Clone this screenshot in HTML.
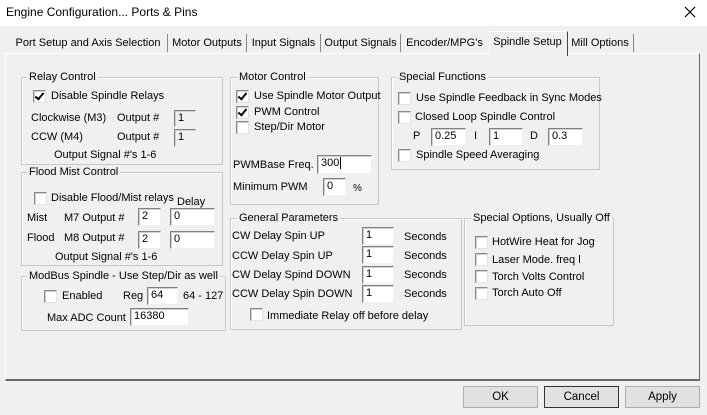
<!DOCTYPE html>
<html><head><meta charset="utf-8"><style>
body{margin:0;width:707px;height:415px;background:#f0f0f0;position:relative;overflow:hidden;font-family:"Liberation Sans",sans-serif;font-size:11px;color:#000}
.a{position:absolute;white-space:nowrap;line-height:14px}
.g{position:absolute;border:1px solid #c8c8c8;box-shadow:inset 1px 1px 0 #fff}
.gl{position:absolute;background:#f0f0f0;padding:0 2px;line-height:14px;white-space:nowrap}
.cb{position:absolute;width:11px;height:11px;border:1px solid #8a8a8a;background:#fff;border-right-color:#e3e3e3;border-bottom-color:#e3e3e3;box-shadow:inset 1px 1px 0 #d0d0d0}
.cb.c::after{content:"";position:absolute;left:3px;top:0px;width:3px;height:7px;border:solid #000;border-width:0 2px 2px 0;transform:rotate(40deg)}
.in{position:absolute;background:#fff;border-top:1px solid #808080;border-left:1px solid #808080;border-right:1px solid #f0f0f0;border-bottom:1px solid #f0f0f0;box-shadow:inset 1px 1px 0 #d0d0d0;line-height:15px;padding-left:3px;box-sizing:border-box}
.in.d{background:#f0f0f0}
.tab{position:absolute;top:34px;height:18px;line-height:18px;border-right:1px solid #888;text-align:center;white-space:nowrap;box-sizing:border-box}
.btn{position:absolute;top:386px;height:22px;width:75px;background:#e1e1e1;border:1px solid #adadad;text-align:center;line-height:20px;box-sizing:border-box;font-size:11.5px}
</style></head><body>
<div style="position:absolute;left:0;top:0;width:707px;height:26px;background:#fff"></div>
<div class="a" style="left:6px;top:5px;font-size:12px">Engine Configuration... Ports &amp; Pins</div>
<svg style="position:absolute;left:684px;top:6px" width="12" height="12"><path d="M1 1L11 11M11 1L1 11" stroke="#000" stroke-width="1.2"/></svg>

<div style="position:absolute;left:5px;top:53px;width:693px;height:325px;border-left:1px solid #fff;border-top:1px solid #fff;border-right:1px solid #696969;border-bottom:2px solid #696969;box-sizing:content-box"></div>
<div class="tab" style="left:9px;width:159px">Port Setup and Axis Selection</div>
<div class="tab" style="left:168px;width:79px">Motor Outputs</div>
<div class="tab" style="left:247px;width:74px">Input Signals</div>
<div class="tab" style="left:321px;width:80px">Output Signals</div>
<div class="tab" style="left:401px;width:87px;border-right:none">Encoder/MPG's</div>
<div style="position:absolute;left:489px;top:31px;width:77px;height:24px;background:#f0f0f0;border-top:1px solid #fff;border-left:1px solid #fff;border-right:1px solid #444"></div>
<div class="a" style="left:489px;top:35px;width:77px;text-align:center">Spindle Setup</div>
<div class="tab" style="left:567px;width:67px">Mill Options</div>

<!-- Relay -->
<div class="g" style="left:21px;top:77px;width:200px;height:86px"></div>
<div class="gl" style="left:27px;top:70px">Relay Control</div>
<div class="cb c" style="left:33px;top:90px"></div><div class="a" style="left:51px;top:89px">Disable Spindle Relays</div>
<div class="a" style="left:31px;top:111px">Clockwise (M3)</div><div class="a" style="left:117px;top:111px">Output #</div>
<div class="in d" style="left:174px;top:110px;width:22px;height:17px">1</div>
<div class="a" style="left:31px;top:130px">CCW (M4)</div><div class="a" style="left:117px;top:130px">Output #</div>
<div class="in d" style="left:174px;top:129px;width:22px;height:18px">1</div>
<div class="a" style="left:54px;top:148px">Output Signal #'s 1-6</div>

<!-- Flood -->
<div class="g" style="left:21px;top:172px;width:200px;height:92px"></div>
<div class="gl" style="left:27px;top:165px">Flood Mist Control</div>
<div class="cb" style="left:34px;top:192px"></div><div class="a" style="left:51px;top:191px">Disable Flood/Mist relays</div>
<div class="a" style="left:177px;top:195px">Delay</div>
<div class="a" style="left:27px;top:211px">Mist</div><div class="a" style="left:64px;top:211px">M7 Output #</div>
<div class="in" style="left:138px;top:208px;width:23px;height:18px">2</div>
<div class="in" style="left:170px;top:208px;width:45px;height:18px">0</div>
<div class="a" style="left:27px;top:231px">Flood</div><div class="a" style="left:64px;top:231px">M8 Output #</div>
<div class="in" style="left:138px;top:231px;width:23px;height:18px">2</div>
<div class="in" style="left:170px;top:231px;width:45px;height:18px">0</div>
<div class="a" style="left:55px;top:250px">Output Signal #'s 1-6</div>

<!-- ModBus -->
<div class="g" style="left:21px;top:276px;width:203px;height:53px"></div>
<div class="gl" style="left:27px;top:269px">ModBus Spindle - Use Step/Dir as well</div>
<div class="cb" style="left:44px;top:290px"></div><div class="a" style="left:62px;top:289px">Enabled</div>
<div class="a" style="left:123px;top:289px">Reg</div>
<div class="in" style="left:147px;top:287px;width:31px;height:18px">64</div>
<div class="a" style="left:183px;top:289px">64 - 127</div>
<div class="a" style="left:47px;top:311px">Max ADC Count</div>
<div class="in" style="left:130px;top:308px;width:59px;height:18px">16380</div>

<!-- Motor -->
<div class="g" style="left:230px;top:77px;width:147px;height:126px"></div>
<div class="gl" style="left:237px;top:70px">Motor Control</div>
<div class="cb c" style="left:236px;top:90px"></div><div class="a" style="left:254px;top:89px">Use Spindle Motor Output</div>
<div class="cb c" style="left:236px;top:106px"></div><div class="a" style="left:254px;top:105px">PWM Control</div>
<div class="cb" style="left:236px;top:121px"></div><div class="a" style="left:254px;top:120px">Step/Dir Motor</div>
<div class="a" style="left:233px;top:158px">PWMBase Freq.</div>
<div class="in" style="left:317px;top:155px;width:55px;height:19px">300<span style="border-left:1px solid #000;margin-left:1px"></span></div>
<div class="a" style="left:233px;top:180px">Minimum PWM</div>
<div class="in" style="left:323px;top:178px;width:23px;height:18px">0</div>
<div class="a" style="left:353px;top:182px;font-size:10px">%</div>

<!-- Special Functions -->
<div class="g" style="left:391px;top:77px;width:207px;height:91px"></div>
<div class="gl" style="left:397px;top:70px">Special Functions</div>
<div class="cb" style="left:398px;top:92px"></div><div class="a" style="left:416px;top:91px">Use Spindle Feedback in Sync Modes</div>
<div class="cb" style="left:398px;top:111px"></div><div class="a" style="left:415px;top:110px">Closed Loop Spindle Control</div>
<div class="a" style="left:413px;top:129px">P</div>
<div class="in" style="left:431px;top:128px;width:35px;height:18px">0.25</div>
<div class="a" style="left:474px;top:129px">I</div>
<div class="in" style="left:489px;top:128px;width:34px;height:18px">1</div>
<div class="a" style="left:530px;top:129px">D</div>
<div class="in" style="left:548px;top:128px;width:35px;height:18px">0.3</div>
<div class="cb" style="left:398px;top:149px"></div><div class="a" style="left:416px;top:148px">Spindle Speed Averaging</div>

<!-- General -->
<div class="g" style="left:230px;top:218px;width:230px;height:110px"></div>
<div class="gl" style="left:237px;top:211px">General Parameters</div>
<div class="a" style="left:232px;top:229px">CW Delay Spin UP</div>
<div class="a" style="left:232px;top:249px">CCW Delay Spin UP</div>
<div class="a" style="left:232px;top:268px">CW Delay Spind DOWN</div>
<div class="a" style="left:232px;top:287px">CCW Delay Spin DOWN</div>
<div class="in" style="left:362px;top:227px;width:32px;height:18px">1</div>
<div class="in" style="left:362px;top:246px;width:32px;height:18px">1</div>
<div class="in" style="left:362px;top:266px;width:32px;height:18px">1</div>
<div class="in" style="left:362px;top:285px;width:32px;height:18px">1</div>
<div class="a" style="left:404px;top:230px">Seconds</div>
<div class="a" style="left:404px;top:249px">Seconds</div>
<div class="a" style="left:404px;top:268px">Seconds</div>
<div class="a" style="left:404px;top:287px">Seconds</div>
<div class="cb" style="left:250px;top:308px"></div><div class="a" style="left:267px;top:309px">Immediate Relay off before delay</div>

<!-- Special Options -->
<div class="g" style="left:464px;top:218px;width:148px;height:106px"></div>
<div class="gl" style="left:471px;top:211px">Special Options, Usually Off</div>
<div class="cb" style="left:475px;top:236px"></div><div class="a" style="left:492px;top:235px">HotWire Heat for Jog</div>
<div class="cb" style="left:475px;top:253px"></div><div class="a" style="left:492px;top:253px">Laser Mode. freq l</div>
<div class="cb" style="left:475px;top:270px"></div><div class="a" style="left:492px;top:270px">Torch Volts Control</div>
<div class="cb" style="left:475px;top:287px"></div><div class="a" style="left:492px;top:286px">Torch Auto Off</div>

<div class="btn" style="left:463px">OK</div>
<div class="btn" style="left:544px;border-color:#333">Cancel</div>
<div class="btn" style="left:625px">Apply</div>
</body></html>
